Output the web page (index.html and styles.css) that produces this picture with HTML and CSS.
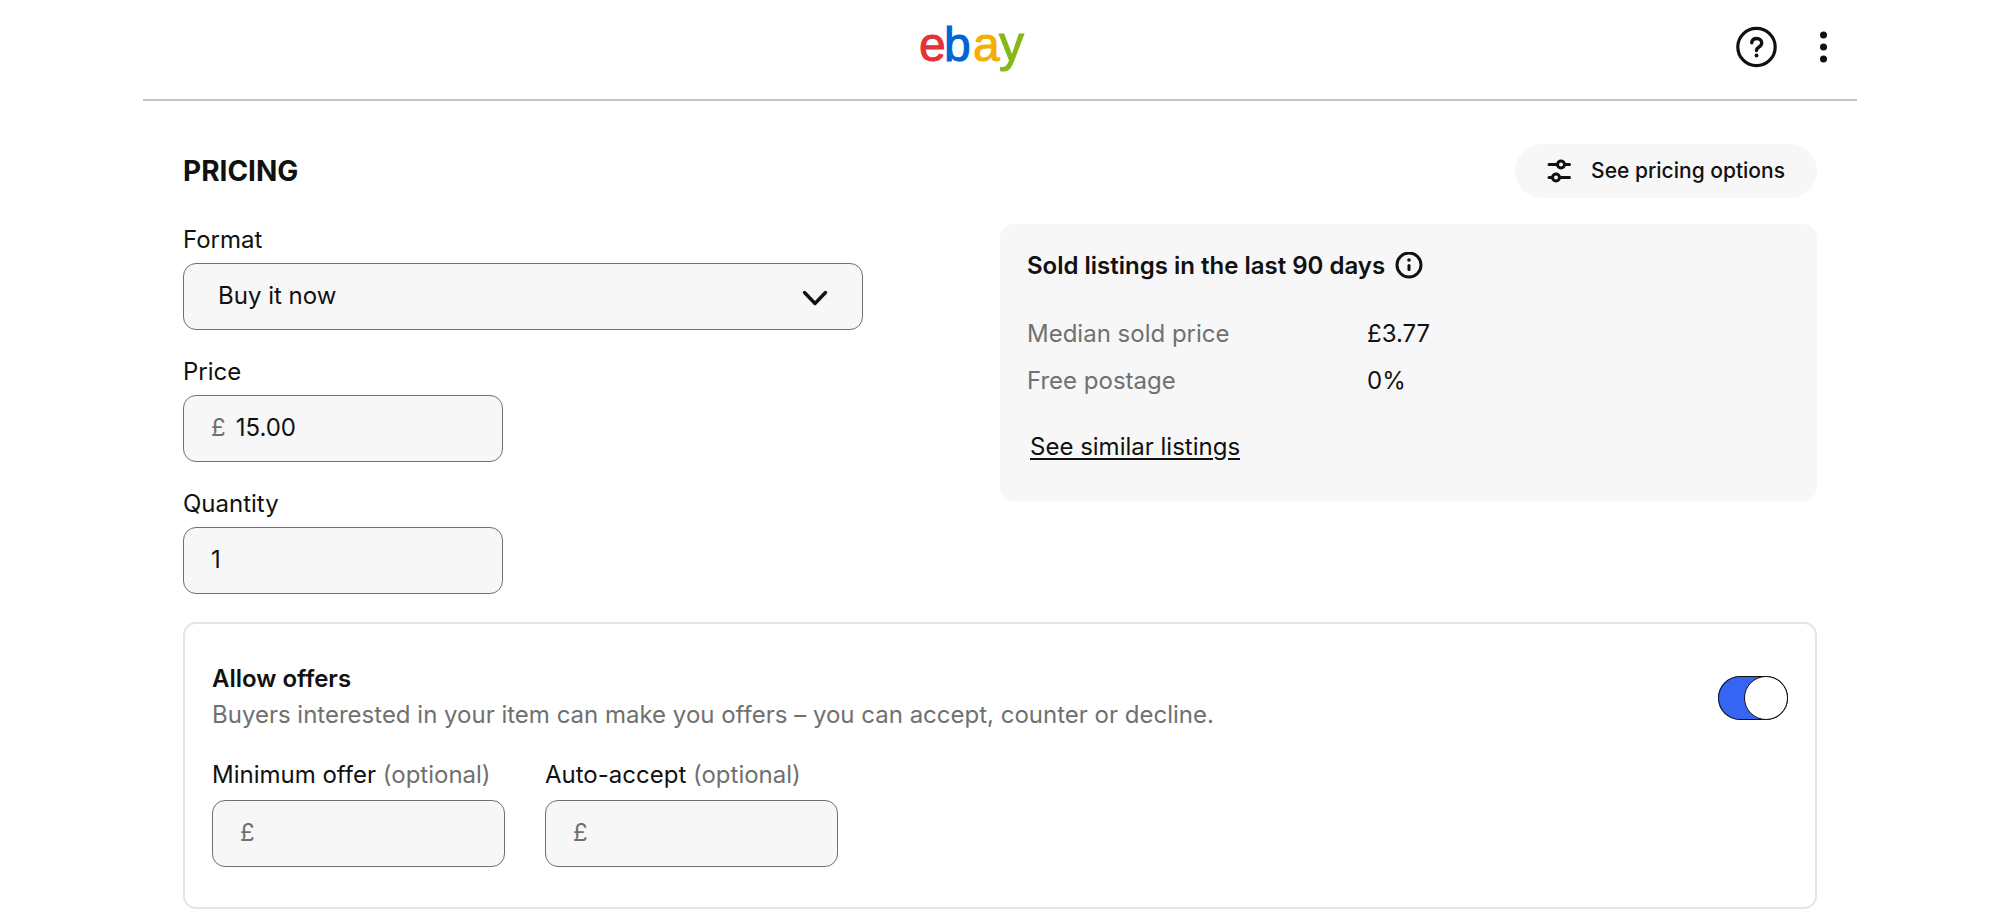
FILE: index.html
```html
<!DOCTYPE html>
<html lang="en-GB">
<head>
<meta charset="utf-8">
<meta name="viewport" content="width=device-width, initial-scale=1">
<title>Pricing | eBay</title>
<link rel="stylesheet" href="styles.css">
</head>
<body>
<div class="page">
  <header class="header">
    <a class="logo" href="#" aria-label="eBay home">
      <svg width="106" height="56" viewBox="0 0 106 56" aria-hidden="true">
        <text class="logo-letter logo-e" x="-1" y="48">e</text>
        <text class="logo-letter logo-a" x="53" y="48">a</text>
        <text class="logo-letter logo-b" x="24" y="48">b</text>
        <text class="logo-letter logo-y" x="79" y="48">y</text>
      </svg>
    </a>
    <div class="actions">
      <button class="icon-button" type="button" aria-label="Help">
        <svg width="42" height="42" viewBox="0 0 42 42" fill="none" stroke="currentColor" stroke-linecap="round" stroke-linejoin="round">
          <circle cx="21.500" cy="21" r="18.700" stroke-width="3.200"/>
          <path d="M16.700 16.800c.3-2.700 2.300-4.300 5-4.300 2.900 0 5 1.900 5 4.400 0 4.500-5.200 3.700-5.200 7.700" stroke-width="3.400"/>
          <circle cx="21.500" cy="29.500" r="1.900" fill="currentColor" stroke="none"/>
        </svg>
      </button>
      <button class="icon-button" type="button" aria-label="More options">
        <svg width="8" height="42" viewBox="0 0 8 42" fill="currentColor">
          <circle cx="4.500" cy="9" r="3.500"/><circle cx="4.500" cy="21" r="3.500"/><circle cx="4.500" cy="33" r="3.500"/>
        </svg>
      </button>
    </div>
  </header>

  <main class="content">
    <div class="title-row">
      <h1 class="title">PRICING</h1>
      <button class="options-button" type="button">
        <svg width="24" height="24" viewBox="0 0 24 24" fill="none" stroke="currentColor" stroke-width="3" stroke-linecap="round" aria-hidden="true">
          <path d="M2 5.500H10M18 5.500H22.500M2 18.500H5M13 18.500H22.500"/>
          <circle cx="14" cy="5.500" r="3.500"/>
          <circle cx="9" cy="18.500" r="3.500"/>
        </svg>
        See pricing options
      </button>
    </div>

    <div class="columns">
      <form class="fields">
        <div class="field">
          <label for="format">Format</label>
          <div class="select-box">
            <select class="control select" id="format"><option>Buy it now</option><option>Auction</option></select>
            <svg class="chevron" width="26" height="18" viewBox="0 0 26 18" fill="none" stroke="currentColor" stroke-width="3.400" stroke-linecap="round" stroke-linejoin="round" aria-hidden="true"><path d="M2.500 4.500 13 15.500 23.500 4.500"/></svg>
          </div>
        </div>
        <div class="field field-short">
          <label for="price">Price</label>
          <div class="control money"><span class="currency">£</span><input class="bare-input" id="price" type="text" value="15.00"></div>
        </div>
        <div class="field field-short">
          <label for="quantity">Quantity</label>
          <input class="control" id="quantity" type="text" value="1">
        </div>
      </form>

      <aside class="insights">
        <h2 class="insights-title">Sold listings in the last 90 days
          <svg width="28" height="28" viewBox="0 0 28 28" fill="none" stroke="currentColor" stroke-width="3" stroke-linecap="round" role="img" aria-label="Information">
            <circle cx="14" cy="13" r="12"/>
            <path d="M14 13.500V17.500"/>
            <circle cx="14" cy="8" r="1.800" fill="currentColor" stroke="none"/>
          </svg>
        </h2>
        <dl class="stats">
          <dt>Median sold price</dt><dd>£3.77</dd>
          <dt>Free postage</dt><dd>0%</dd>
        </dl>
        <a class="similar" href="#">See similar listings</a>
      </aside>
    </div>

    <section class="offers">
      <div class="offers-head">
        <div>
          <h2 class="offers-title" id="offers-title">Allow offers</h2>
          <p class="offers-text">Buyers interested in your item can make you offers – you can accept, counter or decline.</p>
        </div>
        <input class="toggle" type="checkbox" role="switch" aria-labelledby="offers-title" checked>
      </div>
      <div class="offers-fields">
        <div class="field">
          <label for="minimum">Minimum offer <span class="muted">(optional)</span></label>
          <div class="control money"><span class="currency">£</span><input class="bare-input" id="minimum" type="text"></div>
        </div>
        <div class="field">
          <label for="auto">Auto-accept <span class="muted">(optional)</span></label>
          <div class="control money"><span class="currency">£</span><input class="bare-input" id="auto" type="text"></div>
        </div>
      </div>
    </section>
  </main>
</div>
</body>
</html>
```
FILE: styles.css
```css
*, *::before { box-sizing: border-box; }

body {
  margin: 0;
  background: #fff;
  color: #111;
  font: 400 24px/32px Inter, "Liberation Sans", sans-serif;
}

h1, h2, p, dl, dd { margin: 0; }

button, input, select { font: inherit; color: inherit; }

svg { display: block; flex: none; }

.page { padding: 0 143px; }

.header {
  display: grid;
  grid-template-columns: 1fr auto 1fr;
  align-items: center;
  padding: 21px 0 22px;
  border-bottom: 2px solid #c4c4c4;
}

.logo {
  grid-column: 2;
  padding: 0 54px 0 0;
}

.logo svg { margin: -8px 0 8px; overflow: visible; }

.logo-letter { font: 400 48px "Liberation Sans", sans-serif; stroke-width: 1px; }
.logo-e { fill: #e53238; stroke: #e53238; }
.logo-b { fill: #0064d2; stroke: #0064d2; }
.logo-a { fill: #f5af02; stroke: #f5af02; }
.logo-y { fill: #86b817; stroke: #86b817; font-size: 50px; }

.actions {
  display: flex;
  justify-content: flex-end;
  align-self: start;
  gap: 42px;
  padding: 5px 30px 0 0;
}

.icon-button {
  padding: 0;
  border: 0;
  background: none;
}

.content { padding: 43px 40px 12px; }

.title-row {
  display: flex;
  align-items: center;
  justify-content: space-between;
}

.title { font-size: 28px; font-weight: 700; }

.options-button {
  display: flex;
  align-items: center;
  gap: 20px;
  padding: 11px 32px;
  border: 0;
  border-radius: 27px;
  background: #f7f7f7;
  font-size: 21px;
  font-weight: 500;
  line-height: 32px;
}

.columns {
  display: grid;
  grid-template-columns: 1fr 1fr;
  align-items: start;
  margin: 26px 0 28px;
}

.fields { display: grid; gap: 26px; }

.field { display: grid; gap: 7px; max-width: 680px; }
.field-short { max-width: 320px; }

.control {
  width: 100%;
  min-width: 0;
  height: 67px;
  padding: 0 27px 2px;
  border: 1px solid #707070;
  border-radius: 13px;
  background: #f7f7f7;
}

.select-box { display: grid; align-items: center; }
.select-box > * { grid-area: 1 / 1; }

.select { padding: 0 34px 2px; appearance: none; }

.chevron {
  justify-self: end;
  margin-right: 35px;
  pointer-events: none;
}

.money { display: flex; align-items: center; gap: 10px; }

.currency, .muted { color: #707070; }

.bare-input {
  flex: 1;
  min-width: 0;
  padding: 0;
  border: 0;
  background: none;
}

.insights {
  padding: 24px 27px 36px;
  border-radius: 14px;
  background: #f7f7f7;
}

.insights-title {
  display: flex;
  align-items: center;
  gap: 10px;
  font-size: 24px;
  font-weight: 600;
  line-height: 36px;
}

.stats {
  display: grid;
  grid-template-columns: 340px 1fr;
  margin: 26px 0 25px;
  line-height: 47px;
}

.stats dt { color: #707070; }

.similar {
  margin-left: 3px;
  color: inherit;
  line-height: 36px;
  text-underline-offset: 3px;
}

.offers {
  padding: 37px 27px 40px;
  border: 2px solid #e5e5e5;
  border-radius: 13px;
}

.offers-head {
  display: flex;
  align-items: center;
  justify-content: space-between;
  gap: 28px;
  line-height: 36px;
}

.offers-title { font-size: 24px; font-weight: 600; }
.offers-text { color: #707070; }

.toggle {
  display: flex;
  flex: none;
  justify-content: flex-end;
  width: 70px;
  height: 44px;
  margin: 2px 0 0;
  border-radius: 22px;
  appearance: none;
  background: #3665f3;
  box-shadow: inset 0 0 0 1px #111;
}

.toggle::before {
  content: "";
  width: 44px;
  height: 44px;
  border: 1px solid #111;
  border-radius: 50%;
  background: #fff;
}

.toggle:not(:checked) { justify-content: flex-start; background: #8f8f8f; }

.offers-fields {
  display: grid;
  grid-template-columns: repeat(2, minmax(0, 293px));
  gap: 40px;
  margin-top: 26px;
}

.offers-fields .field { gap: 9px; white-space: nowrap; }
```
